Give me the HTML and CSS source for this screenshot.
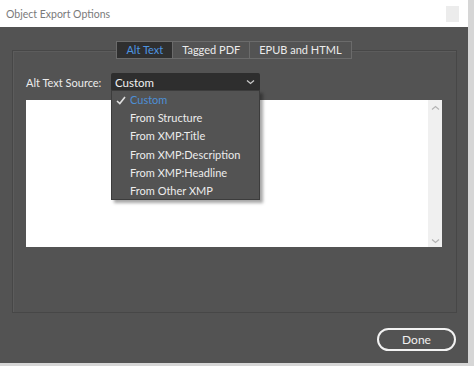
FILE: index.html
```html
<!DOCTYPE html>
<html lang="en">

<head>
    <meta charset="UTF-8">
    <title>Object Export Options</title>
    <link rel="stylesheet" href="styles.css">
</head>

<body>
    <div class="window">
        <div class="titlebar">
            <span class="title">Object Export Options</span>
            <span class="close"></span>
        </div>
        <div class="dialog">
            <div class="group">
                <div class="tabs">
                    <div class="tab active">Alt Text</div>
                    <div class="tab">Tagged PDF</div>
                    <div class="tab">EPUB and HTML</div>
                </div>
                <div class="source-row">
                    <label class="source-label">Alt Text Source:</label>
                    <div class="select">
                        <span>Custom</span>
                        <svg class="chevron" width="9" height="6" viewBox="0 0 9 6">
                            <path d="M1 1.5 L4.5 4.5 L8 1.5" fill="none" stroke="#c8c8c8" stroke-width="1.3" />
                        </svg>
                        <ul class="menu">
                            <li class="selected">
                                <svg class="check" width="10" height="9" viewBox="0 0 10 9">
                                    <path d="M1 5 L3.8 7.6 L9 1" fill="none" stroke="#e0e0e0" stroke-width="1.6" />
                                </svg>Custom
                            </li>
                            <li>From Structure</li>
                            <li>From XMP:Title</li>
                            <li>From XMP:Description</li>
                            <li>From XMP:Headline</li>
                            <li>From Other XMP</li>
                        </ul>
                    </div>
                </div>
                <div class="textarea">
                    <div class="scrollbar">
                        <svg width="9" height="6" viewBox="0 0 9 6">
                            <path d="M1 4.5 L4.5 1.5 L8 4.5" fill="none" stroke="#b4b4b4" stroke-width="1.2" />
                        </svg>
                        <svg width="9" height="6" viewBox="0 0 9 6">
                            <path d="M1 1.5 L4.5 4.5 L8 1.5" fill="none" stroke="#b4b4b4" stroke-width="1.2" />
                        </svg>
                    </div>
                </div>
            </div>
            <div class="buttons">
                <button class="done">Done</button>
            </div>
        </div>
    </div>
</body>

</html>
```

FILE: styles.css
```css
body {
    margin: 0;
    background-color: #d6d6d6;
    font-family: Lato, "Noto Sans", sans-serif;
    font-size: 11px;
}

.window {
    width: 468px;
}

.titlebar {
    height: 27px;
    background-color: #fff;
    display: flex;
    align-items: center;
    justify-content: space-between;
    padding: 0 9px 0 6px;
}

.title {
    color: #7a7a7a;
    font-size: 10.5px;
}

.close {
    width: 13px;
    height: 16px;
    background-color: #ececec;
}

.dialog {
    background-color: #535353;
    height: 336px;
    padding: 23px 11px 0 12px;
    box-sizing: border-box;
}

.group {
    height: 263px;
    border: 1px solid #474747;
    box-shadow: inset 1px 1px 0 #5c5c5c;
    box-sizing: border-box;
    padding: 0 14px 0 13px;
}

.tabs {
    display: flex;
    justify-content: center;
    margin-top: -10px;
}

.tab {
    height: 16px;
    line-height: 16px;
    padding: 0 9px;
    color: #ececec;
    background-color: #535353;
    border: 1px solid #6b6b6b;
    border-left: none;
}

.tab:first-child {
    border-left: 1px solid #6b6b6b;
}

.tab.active {
    background-color: #2f2f2f;
    color: #4d95e0;
    padding: 0 9px;
}

.source-row {
    display: flex;
    align-items: center;
    margin-top: 14px;
    height: 18px;
}

.source-label {
    color: #ececec;
    width: 85px;
    white-space: nowrap;
}

.select {
    position: relative;
    width: 149px;
    height: 18px;
    background-color: #2e2e2e;
    border-radius: 2px;
    color: #f0f0f0;
    font-size: 11.5px;
    display: flex;
    align-items: center;
    justify-content: space-between;
    padding: 0 5px 0 4px;
    box-sizing: border-box;
}

.menu {
    position: absolute;
    top: 17px;
    left: 0;
    width: 149px;
    margin: 0;
    padding: 0;
    list-style: none;
    background-color: #535353;
    border: 1px solid #3c3c3c;
    box-sizing: border-box;
    height: 110px;
    box-shadow: 3px 3px 3px rgba(0, 0, 0, 0.35);
    font-size: 11px;
    z-index: 2;
}

.menu li {
    height: 18.2px;
    line-height: 18px;
    padding-left: 18px;
    color: #ececec;
    position: relative;
}

.menu li.selected {
    color: #4d8fd6;
}

.check {
    position: absolute;
    left: 4px;
    top: 5px;
}

.textarea {
    margin-top: 9px;
    height: 147px;
    background-color: #fff;
    display: flex;
    justify-content: flex-end;
}

.scrollbar {
    width: 14px;
    background-color: #f0f0f0;
    display: flex;
    flex-direction: column;
    justify-content: space-between;
    align-items: center;
    padding: 5px 0 3px;
    box-sizing: border-box;
}

.buttons {
    display: flex;
    justify-content: flex-end;
    margin-top: 15px;
    padding-right: 1px;
}

.done {
    width: 79px;
    height: 23px;
    border: 2px solid #f2f2f2;
    border-radius: 12px;
    background-color: transparent;
    color: #f0f0f0;
    font-family: Lato, "Noto Sans", sans-serif;
    font-size: 12px;
    padding: 0;
}
```
